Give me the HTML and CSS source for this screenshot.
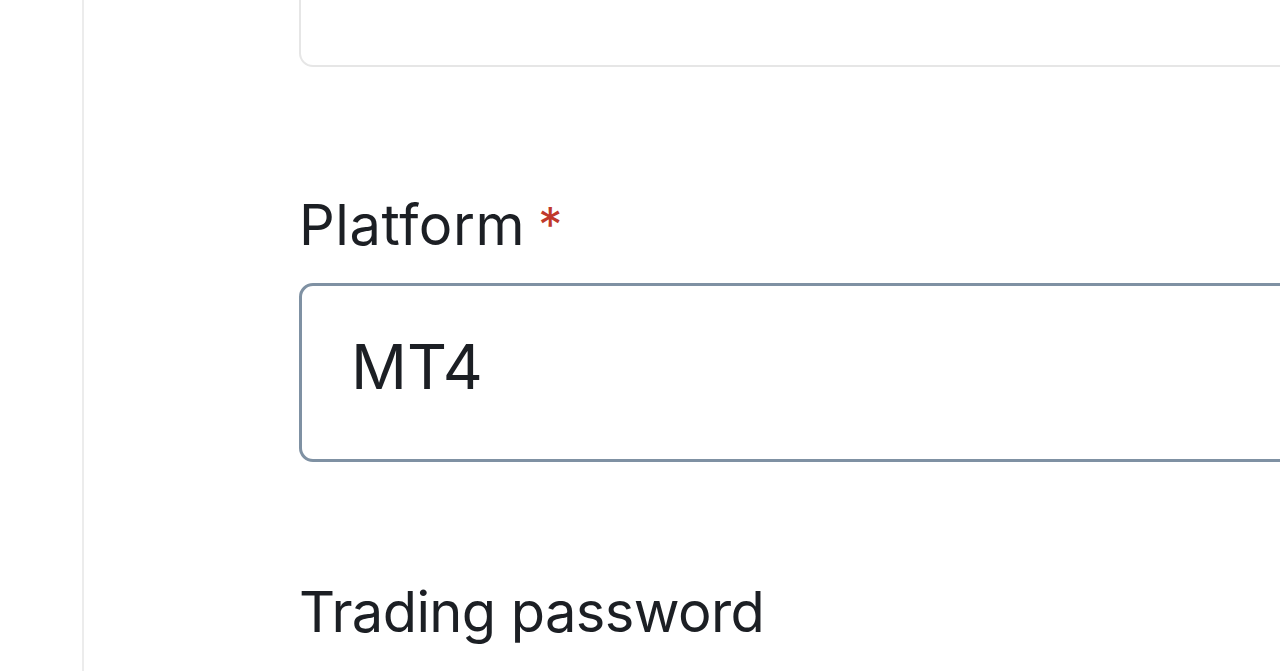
FILE: index.html
```html
<!DOCTYPE html>
<html lang="en">
<head>
<meta charset="utf-8">
<title>Platform form</title>
<link rel="stylesheet" href="styles.css">
</head>
<body>
<div class="layout">
  <aside class="sidebar"></aside>
  <main class="main">
    <div class="field field-first">
      <div class="control control-top"></div>
    </div>
    <div class="field">
      <label class="label"><span class="label-wide">Platform</span><span class="req">*</span></label>
      <div class="control control-focus">MT4</div>
    </div>
    <div class="field field-last">
      <label class="label label-narrow">Trading password</label>
    </div>
  </main>
</div>
</body>
</html>
```
FILE: styles.css
```css
html, body {
  margin: 0;
  padding: 0;
  background: #ffffff;
  overflow: hidden;
}
body {
  font-family: Inter, "Noto Sans", "Liberation Sans", sans-serif;
  color: #1c1f24;
}
.layout {
  display: flex;
  height: 671px;
  width: 1280px;
  overflow: hidden;
}
.sidebar {
  width: 82px;
  flex: none;
  border-right: 2px solid #ececec;
}
.main {
  flex: 1;
  min-width: 0;
  display: flex;
  flex-direction: column;
  padding-left: 215px;
  overflow: hidden;
}
.field {
  display: flex;
  flex-direction: column;
}
.field-first {
  margin-bottom: 118px;
}
.control {
  box-sizing: border-box;
  width: calc(100% + 40px);
  background: #ffffff;
}
.control-top {
  height: 67px;
  border: 2px solid #e6e6e6;
  border-top: none;
  border-radius: 0 0 14px 14px;
}
.label {
  display: block;
  font-size: 56px;
  line-height: 80px;
  height: 80px;
  font-weight: 400;
  margin-bottom: 18px;
}
.label-wide {
  letter-spacing: 0.6px;
}
.label-narrow {
  letter-spacing: -0.6px;
}
.req {
  color: #c0392b;
  font-size: 48px;
  margin-left: 13px;
  vertical-align: 3px;
}
.control-focus {
  height: 179px;
  border: 3px solid #7f91a3;
  border-radius: 14px;
  font-size: 62px;
  line-height: 94px;
  padding: 34px 0 0 49px;
}
.field-last {
  margin-top: 110px;
}
```
